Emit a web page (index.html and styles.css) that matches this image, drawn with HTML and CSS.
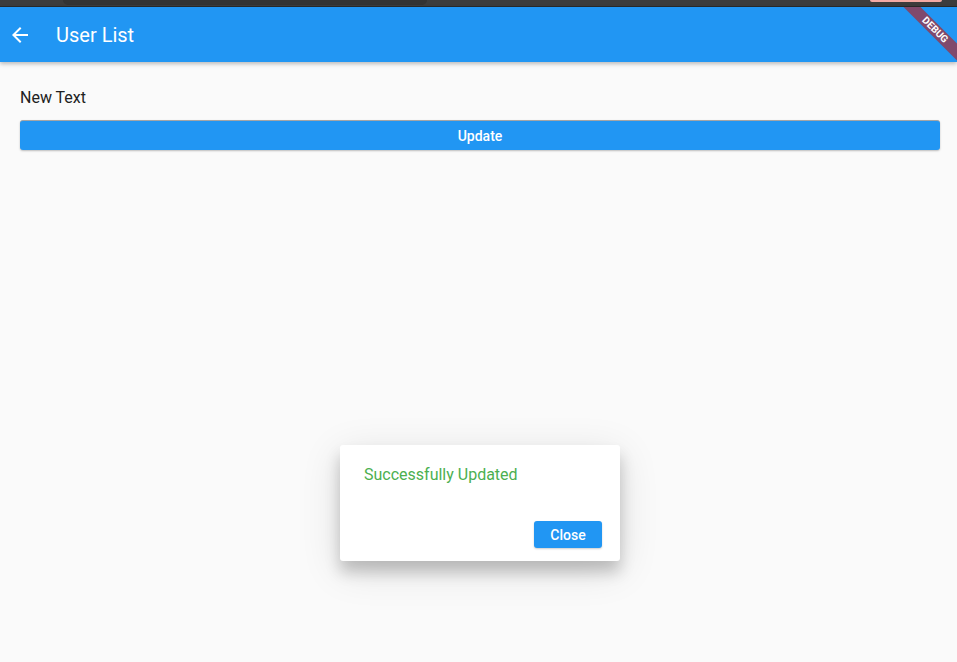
FILE: index.html
```html
<!DOCTYPE html>
<html lang="en">
<head>
    <meta charset="UTF-8">
    <meta name="viewport" content="width=device-width, initial-scale=1.0">
    <title>User List</title>
    <link rel="stylesheet" href="styles.css">
</head>
<body>
    <div class="window-strip">
        <div class="strip-tab"></div>
        <div class="strip-pill"></div>
    </div>

    <header class="app-bar">
        <button class="back-button" aria-label="Back">
            <svg width="24" height="24" viewBox="0 0 24 24">
                <path d="M20 11H7.83l5.59-5.59L12 4l-8 8 8 8 1.41-1.41L7.83 13H20v-2z" fill="#fff"/>
            </svg>
        </button>
        <div class="app-title">User List</div>
        <div class="debug-banner">DEBUG</div>
    </header>

    <main class="content">
        <div class="field-text">New Text</div>
        <button class="update-button">Update</button>
    </main>

    <div class="dialog">
        <div class="dialog-message">Successfully Updated</div>
        <div class="dialog-actions">
            <button class="close-button">Close</button>
        </div>
    </div>
</body>
</html>
```

FILE: styles.css
```css
html, body {
    height: 100%;
}

body {
    margin: 0;
    font-family: Roboto, "Noto Sans", Arial, sans-serif;
    background-color: #fafafa;
    overflow: hidden;
}

button {
    font-family: inherit;
    border: none;
    cursor: pointer;
}

/* top window strip */
.window-strip {
    display: flex;
    align-items: flex-start;
    height: 6px;
    background-color: #3c3c3c;
    border-bottom: 1px solid #2a2a2a;
    padding-left: 63px;
}

.strip-tab {
    width: 364px;
    height: 5px;
    background-color: #333333;
    border-radius: 0 0 6px 6px;
}

.strip-pill {
    width: 72px;
    height: 2px;
    margin-left: auto;
    margin-right: 15px;
    background-color: #f4a9a3;
    border-radius: 0 0 2px 2px;
}

/* app bar */
.app-bar {
    position: relative;
    display: flex;
    align-items: center;
    height: 55px;
    background-color: #2196F3;
    box-shadow: 0 2px 4px rgba(0, 0, 0, 0.25);
    overflow: hidden;
    z-index: 1;
}

.back-button {
    display: flex;
    padding: 0;
    margin-left: 8px;
    background: none;
}

.app-title {
    margin-left: 24px;
    color: white;
    font-size: 20px;
    font-weight: 400;
}

.debug-banner {
    position: absolute;
    top: 17px;
    right: -28px;
    width: 100px;
    height: 12px;
    line-height: 12px;
    transform: rotate(45deg);
    background-color: rgba(183, 28, 28, 0.63);
    color: white;
    font-size: 10px;
    font-weight: bold;
    text-align: center;
}

/* page content */
.content {
    padding: 26px 17px 0 20px;
}

.field-text {
    font-size: 16px;
    line-height: 19px;
    color: #212121;
    margin-bottom: 13px;
}

.update-button {
    display: block;
    width: 100%;
    height: 30px;
    border-top: 1px solid #a5a5a5;
    border-radius: 3px;
    background-color: #2196F3;
    color: white;
    font-size: 14px;
    font-weight: 500;
    box-shadow: 0 1px 2px rgba(0, 0, 0, 0.25);
}

/* dialog */
.dialog {
    position: absolute;
    left: 340px;
    top: 445px;
    width: 280px;
    height: 116px;
    box-sizing: border-box;
    padding: 20px 18px 13px 24px;
    display: flex;
    flex-direction: column;
    background-color: white;
    border-radius: 3px;
    box-shadow: 0 11px 15px rgba(0, 0, 0, 0.2), 0 9px 40px rgba(0, 0, 0, 0.12);
}

.dialog-message {
    color: #4CAF50;
    font-size: 16px;
    line-height: 19px;
}

.dialog-actions {
    display: flex;
    justify-content: flex-end;
    margin-top: auto;
}

.close-button {
    width: 68px;
    height: 27px;
    border-radius: 3px;
    background-color: #2196F3;
    color: white;
    font-size: 14px;
    font-weight: 500;
    box-shadow: 0 1px 2px rgba(0, 0, 0, 0.2);
}
```
